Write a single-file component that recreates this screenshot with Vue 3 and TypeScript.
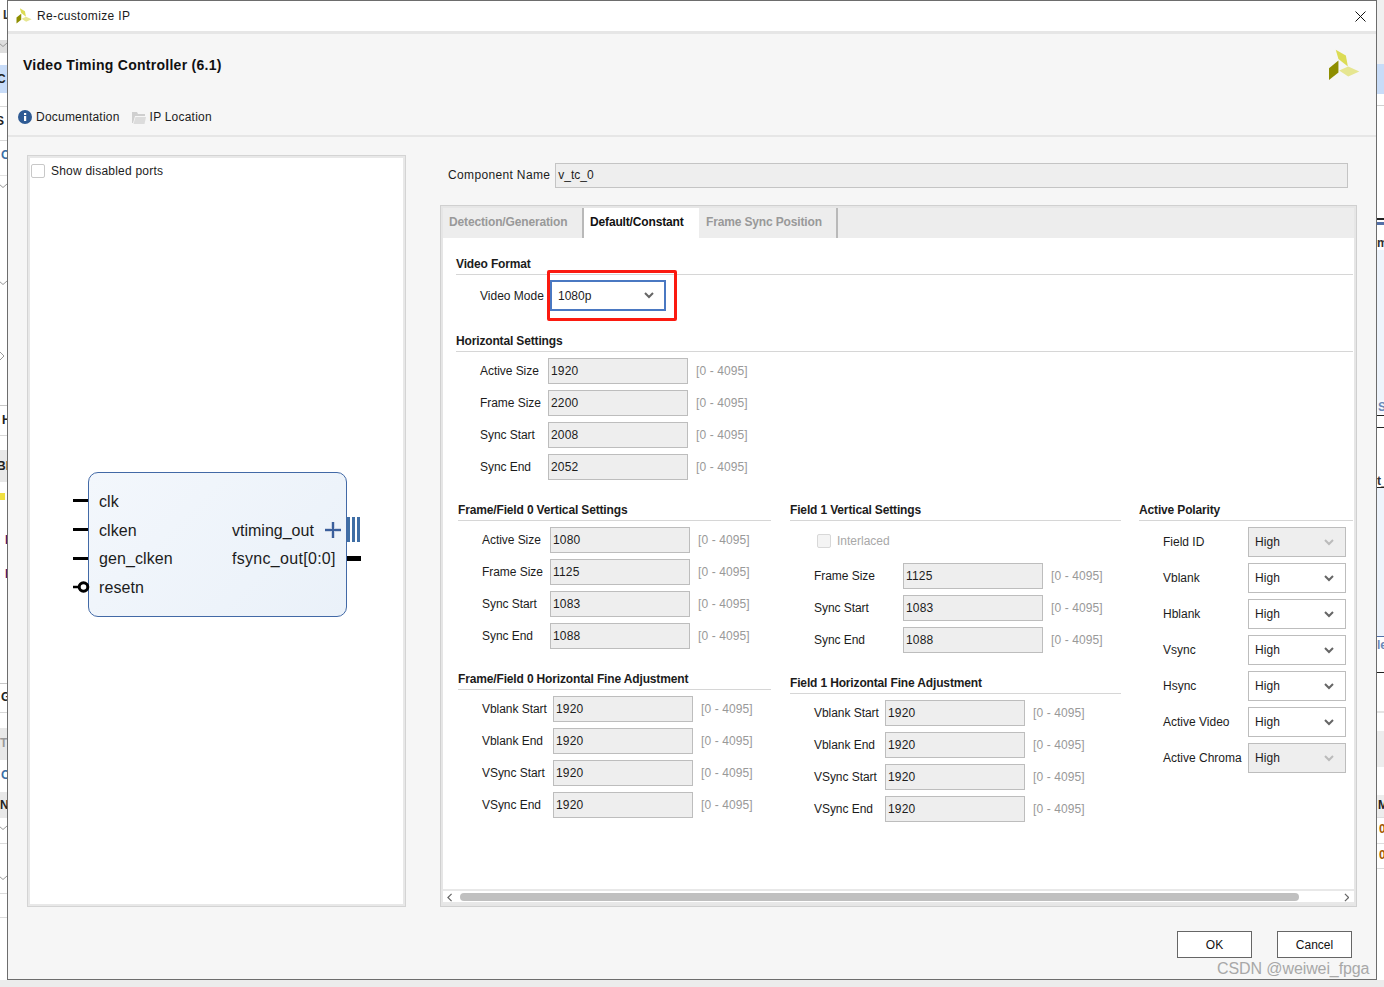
<script setup lang="ts">
interface Field { label: string; value: string }
interface FieldGroup { title: string; labelWidth: number; interlaced?: boolean; rows: Field[] }

const f = (label: string, value: string): Field => ({ label, value })

const horizontal: FieldGroup = {
  title: 'Horizontal Settings', labelWidth: 68,
  rows: [f('Active Size', '1920'), f('Frame Size', '2200'), f('Sync Start', '2008'), f('Sync End', '2052')]
}
const fine = (title: string, labelWidth: number): FieldGroup => ({
  title, labelWidth,
  rows: [f('Vblank Start', '1920'), f('Vblank End', '1920'), f('VSync Start', '1920'), f('VSync End', '1920')]
})
const column1: FieldGroup[] = [
  { title: 'Frame/Field 0 Vertical Settings', labelWidth: 68,
    rows: [f('Active Size', '1080'), f('Frame Size', '1125'), f('Sync Start', '1083'), f('Sync End', '1088')] },
  fine('Frame/Field 0 Horizontal Fine Adjustment', 71)
]
const column2: FieldGroup[] = [
  { title: 'Field 1 Vertical Settings', labelWidth: 89, interlaced: true,
    rows: [f('Frame Size', '1125'), f('Sync Start', '1083'), f('Sync End', '1088')] },
  fine('Field 1 Horizontal Fine Adjustment', 71)
]
const columns = [
  { cls: 'col-a', groups: column1 },
  { cls: 'col-b', groups: column2 }
]
const polarity = [
  { label: 'Field ID', off: true }, { label: 'Vblank', off: false }, { label: 'Hblank', off: false },
  { label: 'Vsync', off: false }, { label: 'Hsync', off: false }, { label: 'Active Video', off: false },
  { label: 'Active Chroma', off: true }
]
const leftPorts = ['clk', 'clken', 'gen_clken', 'resetn']
const rightPorts = [{ name: 'vtiming_out', cls: '' }, { name: 'fsync_out[0:0]', cls: 'wide' }]

const bands = [
  { x: 0, w: 7, t: 40, h: 13, c: '#dedede' }, { x: 0, w: 7, t: 65, h: 28, c: '#c8dcf8' },
  { x: 0, w: 7, t: 106, h: 1, c: '#d8d8d8' }, { x: 0, w: 7, t: 140, h: 1, c: '#d8d8d8' },
  { x: 0, w: 7, t: 175, h: 1, c: '#e2e2e2' }, { x: 0, w: 7, t: 405, h: 1, c: '#c8c8c8' },
  { x: 0, w: 7, t: 435, h: 1, c: '#d8d8d8' }, { x: 0, w: 7, t: 450, h: 32, c: '#e8e8e8' },
  { x: 0, w: 7, t: 683, h: 1, c: '#c8c8c8' }, { x: 0, w: 7, t: 712, h: 1, c: '#d8d8d8' },
  { x: 0, w: 7, t: 728, h: 32, c: '#e8e8e8' }, { x: 0, w: 7, t: 792, h: 26, c: '#e8e8e8' },
  { x: 0, w: 7, t: 843, h: 1, c: '#dcdcdc' }, { x: 0, w: 7, t: 893, h: 1, c: '#dcdcdc' },
  { x: 0, w: 7, t: 917, h: 1, c: '#dcdcdc' },
  { x: 0, w: 1384, t: 980, h: 7, c: '#ececec' },
  { x: 1377, w: 7, t: 0, h: 64, c: '#f0f0f0' }, { x: 1377, w: 7, t: 64, h: 30, c: '#c8dcf8' },
  { x: 1377, w: 7, t: 105, h: 1, c: '#d0d0d0' }, { x: 1377, w: 7, t: 218, h: 2, c: '#222' },
  { x: 1377, w: 7, t: 222, h: 3, c: '#5470a8' }, { x: 1377, w: 7, t: 250, h: 150, c: '#eef4fc' },
  { x: 1377, w: 7, t: 400, h: 14, c: '#f4f8fd' }, { x: 1377, w: 7, t: 415, h: 1, c: '#222' },
  { x: 1377, w: 7, t: 427, h: 1, c: '#222' }, { x: 1377, w: 7, t: 487, h: 1, c: '#222' },
  { x: 1377, w: 7, t: 488, h: 148, c: '#eef4fc' }, { x: 1377, w: 7, t: 636, h: 1, c: '#5470a8' },
  { x: 1377, w: 7, t: 672, h: 1, c: '#222' }, { x: 1377, w: 7, t: 711, h: 2, c: '#e4e4e4' },
  { x: 1377, w: 7, t: 731, h: 36, c: '#ededed' }, { x: 1377, w: 7, t: 795, h: 22, c: '#ededed' },
  { x: 1377, w: 7, t: 817, h: 1, c: '#ddd' }, { x: 1377, w: 7, t: 843, h: 1, c: '#ddd' },
  { x: 1377, w: 7, t: 868, h: 1, c: '#ddd' }
]
const scraps = [
  { x: 3, y: 8, s: 'L', c: '#333' }, { x: -3, y: 72, s: 'C', c: '#222' }, { x: -4, y: 114, s: 'S', c: '#222' },
  { x: 1, y: 148, s: 'C', c: '#3a6ea5' }, { x: 2, y: 413, s: 'H', c: '#222' }, { x: -3, y: 459, s: 'BI', c: '#222' },
  { x: 5, y: 533, s: 'I', c: '#4b1a6b' }, { x: 5, y: 567, s: 'F', c: '#4b1a6b' }, { x: 1, y: 690, s: 'G', c: '#222' },
  { x: 0, y: 736, s: 'T', c: '#999' }, { x: 1, y: 768, s: 'C', c: '#3a6ea5' }, { x: 0, y: 798, s: 'N', c: '#222' },
  { x: 1377, y: 236, s: 'm', c: '#333' }, { x: 1378, y: 400, s: 'S', c: '#6a88b8' }, { x: 1377, y: 474, s: 't_', c: '#333' },
  { x: 1377, y: 638, s: 'le', c: '#6a88b8' }, { x: 1378, y: 798, s: 'M', c: '#222' },
  { x: 1379, y: 822, s: '0', c: '#a35a00' }, { x: 1379, y: 848, s: '0', c: '#a35a00' }
]
const chevrons = [45, 186, 283, 828, 878]
</script>

<template>
  <div class="desk">
    <i v-for="(b, n) in bands" :key="'b' + n" class="band"
       :style="{ left: b.x + 'px', width: b.w + 'px', top: b.t + 'px', height: b.h + 'px', background: b.c }"></i>
    <span v-for="(s, n) in scraps" :key="'s' + n" class="scrap"
          :style="{ left: s.x + 'px', top: s.y + 'px', color: s.c }">{{ s.s }}</span>
    <svg v-for="y in chevrons" :key="y" class="scrap-icon" width="8" height="6" viewBox="0 0 8 6"
         :style="{ top: y - 3 + 'px' }"><path d="M0 1l4 3.500L8 1" fill="none" stroke="#999" stroke-width="1" /></svg>
    <svg class="scrap-icon" width="8" height="10" viewBox="0 0 8 10" style="top: 351px"><path d="M1 1l4 4-4 4" fill="none" stroke="#999" /></svg>
    <i class="yellow-tag"></i>

    <section class="dialog">
      <header class="titlebar">
        <svg class="logo-small" width="16" height="16" viewBox="595 148 95 95">
          <polygon points="618,150 648,167 654,200 626,178" fill="#dcdc55" />
          <polygon points="598,205 626,182 626,218 598,240" fill="#8e8e00" />
          <polygon points="628,212 655,200 688,215 655,230" fill="#e6e691" />
        </svg>
        <span class="window-title">Re-customize IP</span>
        <svg class="close" width="11" height="11" viewBox="0 0 11 11"><path d="M.5.5l10 10M10.500.5l-10 10" stroke="#111" fill="none" /></svg>
      </header>

      <div class="hero">
        <div class="hero-top">
          <h1>Video Timing Controller (6.1)</h1>
          <svg width="32" height="32" viewBox="595 148 95 95">
            <polygon points="618,150 648,167 654,200 626,178" fill="#dcdc55" />
            <polygon points="598,205 626,182 626,218 598,240" fill="#8e8e00" />
            <polygon points="628,212 655,200 688,215 655,230" fill="#e6e691" />
          </svg>
        </div>
        <nav class="links">
          <span class="link">
            <svg width="14" height="14" viewBox="0 0 14 14"><circle cx="7" cy="7" r="7" fill="#2f5b94" /><rect x="6" y="6" width="2.200" height="5" fill="#fff" /><rect x="6" y="3" width="2.200" height="2" fill="#fff" /></svg>
            Documentation
          </span>
          <span class="link">
            <svg width="14" height="13" viewBox="0 0 14 13"><path d="M0 1h5l1 2h7v2H3L1 12H0z" fill="#cfcfcf" /><path d="M3.500 6H14l-1.500 7H1.500z" fill="#dcdcdc" /></svg>
            IP Location
          </span>
        </nav>
      </div>

      <main class="body">
        <aside class="symbol-panel">
          <label class="check-row"><i class="checkbox"></i>Show disabled ports</label>
          <div class="ip-block">
            <div class="ports-left">
              <div v-for="p in leftPorts" :key="p">{{ p }}</div>
            </div>
            <div class="ports-right">
              <div v-for="p in rightPorts" :key="p.name" :class="p.cls">{{ p.name }}</div>
            </div>
            <i v-for="(p, n) in [0, 1, 2]" :key="p" class="stem" :class="'stem' + n"></i>
            <svg class="reset-pin" width="17" height="12" viewBox="0 0 17 12">
              <path d="M0 6h5" stroke="#000" stroke-width="2.500" />
              <circle cx="10.500" cy="6" r="4.300" fill="#fff" stroke="#000" stroke-width="3" />
            </svg>
            <svg class="plus" width="18" height="18" viewBox="0 0 18 18">
              <path d="M9 1v16M1 9h16" stroke="#c9d3e4" stroke-width="4" />
              <path d="M9 1v16M1 9h16" stroke="#3a5f9c" stroke-width="2" />
            </svg>
            <svg class="bus" width="14" height="25" viewBox="0 0 14 25">
              <path d="M1.500 0v25M6.500 0v25M11.500 0v25" stroke="#3f6ea5" stroke-width="3" />
            </svg>
            <i class="fsync-pin"></i>
          </div>
        </aside>

        <div class="config">
          <div class="name-row">
            <span class="name-label">Component Name</span>
            <div class="name-input">v_tc_0</div>
          </div>

          <div class="tabs-panel">
            <div class="tabs">
              <div class="tab tab1">Detection/Generation</div>
              <div class="tab tab2">Default/Constant</div>
              <div class="tab tab3">Frame Sync Position</div>
            </div>

            <div class="scroll">
              <div class="upper">
                <h2>Video Format</h2>
                <div class="mode-row">
                  <span class="mode-label">Video Mode</span>
                  <div class="mode-combo">
                    1080p
                    <svg width="10" height="7" viewBox="0 0 10 7"><path d="M1 1l4 4 4-4" fill="none" stroke="#666" stroke-width="2" /></svg>
                    <i class="highlight"></i>
                  </div>
                </div>

                <h2 class="next">{{ horizontal.title }}</h2>
                <div class="rows">
                  <div v-for="r in horizontal.rows" :key="r.label" class="row">
                    <span :style="{ width: horizontal.labelWidth + 'px' }">{{ r.label }}</span>
                    <div class="value">{{ r.value }}</div>
                    <em>[0 - 4095]</em>
                  </div>
                </div>
              </div>

              <div class="columns">
                <div v-for="col in columns" :key="col.cls" :class="col.cls">
                  <template v-for="(g, gi) in col.groups" :key="g.title">
                    <h2 :class="{ next: gi > 0 }">{{ g.title }}</h2>
                    <div class="rows">
                      <label v-if="g.interlaced" class="interlaced"><i class="checkbox off"></i>Interlaced</label>
                      <div v-for="r in g.rows" :key="r.label" class="row">
                        <span :style="{ width: g.labelWidth + 'px' }">{{ r.label }}</span>
                        <div class="value">{{ r.value }}</div>
                        <em>[0 - 4095]</em>
                      </div>
                    </div>
                  </template>
                </div>

                <div class="col-c">
                  <h2>Active Polarity</h2>
                  <div class="rows">
                    <div v-for="p in polarity" :key="p.label" class="row pol">
                      <span>{{ p.label }}</span>
                      <div class="combo" :class="{ disabled: p.off }">
                        High
                        <svg width="10" height="7" viewBox="0 0 10 7"><path d="M1 1l4 4 4-4" fill="none" stroke-width="2" /></svg>
                      </div>
                    </div>
                  </div>
                </div>
              </div>
            </div>

            <div class="hscroll">
              <svg width="6" height="9" viewBox="0 0 6 9"><path d="M5 .5l-4 4 4 4" fill="none" stroke="#666" stroke-width="1.300" /></svg>
              <div class="thumb"></div>
              <svg width="6" height="9" viewBox="0 0 6 9"><path d="M1 .5l4 4-4 4" fill="none" stroke="#666" stroke-width="1.300" /></svg>
            </div>
          </div>
        </div>
      </main>

      <footer class="actions">
        <button type="button">OK</button>
        <button type="button">Cancel</button>
      </footer>
    </section>

    <span class="watermark">CSDN @weiwei_fpga</span>
  </div>
</template>

<style>
html, body { background: #fff; overflow: hidden; }
</style>

<style scoped>
.desk { position: relative; width: 1384px; height: 987px; overflow: hidden; font: 12px/14px "Liberation Sans", Arial, sans-serif; color: #1c1c1c; background: #fff; }
.band { position: absolute; display: block; }
.scrap { position: absolute; font-size: 12px; line-height: 14px; font-weight: 700; }
.scrap-icon { position: absolute; left: -1px; }
.yellow-tag { position: absolute; left: 0; top: 493px; width: 5px; height: 7px; background: #f0e040; }

.dialog { position: absolute; left: 7px; top: 0; width: 1370px; height: 980px; box-sizing: border-box; border: 1px solid #6d6d6d; background: #f6f6f6; display: flex; flex-direction: column; }

.titlebar { height: 30px; flex: none; background: #fff; border-bottom: 3px solid #e6e6e6; display: flex; align-items: center; padding-left: 8px; }
.logo-small { margin-right: 5px; }
.window-title { font-size: 12px; letter-spacing: .35px; }
.close { margin-left: auto; margin-right: 10px; }

.hero { height: 103px; flex: none; box-sizing: border-box; border-bottom: 2px solid #e6e6e6; display: flex; flex-direction: column; }
.hero-top { display: flex; align-items: center; justify-content: space-between; padding: 15px 16px 0 15px; height: 32px; }
h1 { margin: 0; font-size: 14px; line-height: 32px; font-weight: 700; color: #111; letter-spacing: .27px; }
.links { display: flex; gap: 12px; padding: 28px 0 0 10px; }
.link { display: flex; align-items: center; gap: 4px; height: 16px; letter-spacing: .22px; }

.body { flex: 1; min-height: 0; display: flex; gap: 34px; padding: 18px 19px 0; }

.symbol-panel { width: 379px; height: 752px; box-sizing: border-box; flex: none; background: #fff; border: 1px solid #d4d4d4; box-shadow: inset 0 0 0 2px #e8e8e8; padding: 2px; }
.check-row { display: flex; align-items: center; gap: 6px; padding: 5px 0 0 1px; height: 16px; letter-spacing: .22px; }
.checkbox { display: block; width: 12px; height: 12px; border: 1px solid #c8c8c8; border-radius: 2px; background: #fff; }
.checkbox.off { background: #f4f4f4; border-color: #d8d8d8; }

.ip-block { position: relative; width: 259px; height: 145px; box-sizing: border-box; margin: 293px 0 0 58px; border: 1px solid #4269a6; border-radius: 10px; background: linear-gradient(135deg, #f3f7fc, #eaf1f9); display: flex; justify-content: space-between; padding-top: 15px; font-size: 16px; line-height: 28.700px; color: #1c1c1c; }
.ports-left { padding-left: 10px; letter-spacing: .1px; }
.ports-right { width: 114px; margin-top: 28.700px; }
.ports-right .wide { letter-spacing: .3px; }
.stem { position: absolute; left: -16px; width: 15px; height: 3px; background: #000; }
.stem0 { top: 26px; }
.stem1 { top: 55px; }
.stem2 { top: 84px; }
.reset-pin { position: absolute; left: -16px; top: 108px; }
.plus { position: absolute; left: 235px; top: 48px; }
.bus { position: absolute; left: 258px; top: 44px; }
.fsync-pin { position: absolute; left: 258px; top: 83px; width: 14px; height: 5px; background: #000; }

.config { width: 917px; flex: none; display: flex; flex-direction: column; }
.name-row { display: flex; align-items: center; gap: 5px; height: 26px; margin: 7px 9px 0 8px; flex: none; }
.name-label { letter-spacing: .35px; white-space: nowrap; }
.name-input { flex: 1; height: 25px; box-sizing: border-box; background: #eee; border: 1px solid #c4c4c4; padding: 0 2px; line-height: 23px; }

.tabs-panel { height: 702px; margin-top: 17px; box-sizing: border-box; flex: none; border: 1px solid #d0d0d0; box-shadow: inset 0 0 0 2px #e6e6e6; padding: 2px; display: flex; flex-direction: column; }
.tabs { display: flex; height: 30px; flex: none; background: #ededed; font-weight: 700; color: #999; line-height: 28px; letter-spacing: -.15px; }
.tab { box-sizing: border-box; white-space: nowrap; padding-left: 6px; }
.tab1 { width: 141px; border-right: 2px solid #b9b9b9; }
.tab2 { width: 115px; background: #fff; color: #111; }
.tab3 { width: 139px; border-right: 2px solid #b9b9b9; padding-left: 7px; }

.scroll { flex: 1; min-height: 0; background: #fff; }
.upper { padding: 19px 1px 0 13px; }
h2 { margin: 0; font-size: 12px; line-height: 14px; font-weight: 700; color: #1c1c1c; padding-bottom: 3px; border-bottom: 1px solid #d6d6d6; letter-spacing: -.15px; white-space: nowrap; }
h2.next { margin-top: 23px; }

.mode-row { display: flex; align-items: center; margin-top: 5px; padding-left: 24px; height: 31px; }
.mode-label { width: 70px; }
.mode-combo { position: relative; width: 116px; height: 31px; box-sizing: border-box; border: 2px solid #4a78c2; background: #fff; padding: 0 10px 0 6px; display: flex; align-items: center; justify-content: space-between; }
.highlight { position: absolute; left: -5px; top: -12px; width: 130px; height: 51px; box-sizing: border-box; border: 3px solid #fb1a10; border-radius: 2px; }

.rows { display: flex; flex-direction: column; gap: 6px; margin-top: 6px; }
.row { display: flex; align-items: center; height: 26px; padding-left: 24px; white-space: nowrap; }
.row span { letter-spacing: -.05px; }
.value { width: 140px; height: 26px; box-sizing: border-box; background: #eee; border: 1px solid #bdbdbd; padding: 0 2px; line-height: 24px; flex: none; letter-spacing: .2px; }
em { font-style: normal; color: #999; margin-left: 8px; letter-spacing: .1px; }

.columns { display: flex; gap: 19px; margin-top: 23px; padding-left: 15px; }
.col-a { width: 313px; flex: none; }
.col-b { width: 331px; flex: none; margin-right: -1px; }
.col-c { width: 214px; flex: none; }
.interlaced { display: flex; align-items: center; gap: 6px; height: 28px; margin-bottom: 2px; padding-left: 27px; color: #a8a8a8; }

.row.pol { height: 30px; }
.pol span { width: 85px; letter-spacing: 0; }
.combo { width: 98px; height: 30px; box-sizing: border-box; flex: none; background: #fff; border: 1px solid #bdbdbd; padding: 0 11px 0 6px; display: flex; align-items: center; justify-content: space-between; letter-spacing: .1px; }
.combo svg { stroke: #666; }
.combo.disabled { background: #eee; }
.combo.disabled svg { stroke: #bbb; }

.hscroll { height: 15px; flex: none; box-sizing: border-box; background: #fff; border-top: 2px solid #e8e8e8; border-bottom: 2px solid #e8e8e8; display: flex; align-items: center; padding: 1px 5px 0 4px; }
.thumb { width: 839px; height: 8px; flex: none; border-radius: 4px; background: #c0c0c0; margin: 0 45px 0 7px; }

.actions { flex: none; height: 72px; box-sizing: border-box; display: flex; justify-content: flex-end; gap: 25px; padding: 24px 24px 0 0; }
button { width: 75px; height: 27px; box-sizing: border-box; background: #fff; border: 1px solid #666; border-radius: 0; font: 12px/14px "Liberation Sans", Arial, sans-serif; color: #111; padding: 0; }

.watermark { position: absolute; left: 1217px; top: 960px; font-size: 16px; line-height: 18px; color: #a8a8a8; white-space: nowrap; letter-spacing: -.1px; }
</style>
